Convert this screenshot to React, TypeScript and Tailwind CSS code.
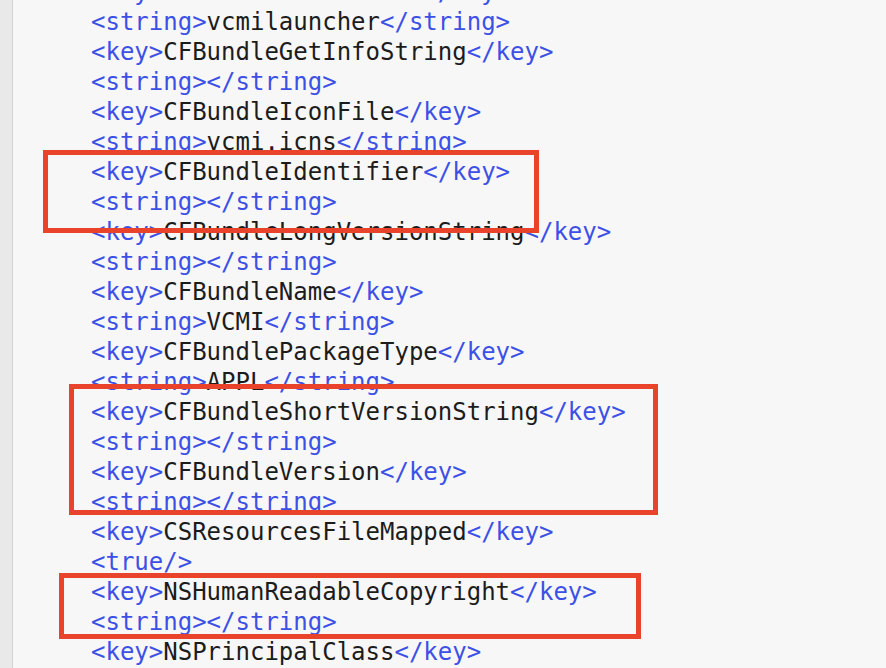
const lines: [string, string][] = [
  ["key", "CFBundleExecutable"],
  ["string", "vcmilauncher"],
  ["key", "CFBundleGetInfoString"],
  ["string", ""],
  ["key", "CFBundleIconFile"],
  ["string", "vcmi.icns"],
  ["key", "CFBundleIdentifier"],
  ["string", ""],
  ["key", "CFBundleLongVersionString"],
  ["string", ""],
  ["key", "CFBundleName"],
  ["string", "VCMI"],
  ["key", "CFBundlePackageType"],
  ["string", "APPL"],
  ["key", "CFBundleShortVersionString"],
  ["string", ""],
  ["key", "CFBundleVersion"],
  ["string", ""],
  ["key", "CSResourcesFileMapped"],
  ["true", ""],
  ["key", "NSHumanReadableCopyright"],
  ["string", ""],
  ["key", "NSPrincipalClass"],
]

function Line({ tag, value }: { tag: string; value: string }) {
  if (tag === "true") {
    return <div className="h-[30px] whitespace-pre text-[#3d50e6]">{"<true/>"}</div>
  }
  return (
    <div className="h-[30px] whitespace-pre">
      <span className="text-[#3d50e6]">{`<${tag}>`}</span>
      <span className="text-[#1c1c1c]">{value}</span>
      <span className="text-[#3d50e6]">{`</${tag}>`}</span>
    </div>
  )
}

export default function App() {
  return (
    <div className="relative flex h-[668px] w-[886px] overflow-hidden bg-[#f7f7f7] font-['DejaVu_Sans_Mono',monospace] text-[24px] leading-[30px]">
      {/* gutter */}
      <div className="w-[13px] shrink-0 border-r border-[#d2d2d2] bg-[#e9e9e9]"></div>

      {/* code */}
      <div className="-mt-[23px] pl-[78px]">
        {lines.map(([tag, value], i) => (
          <Line key={i} tag={tag} value={value} />
        ))}
      </div>

      {/* annotation boxes */}
      <div className="absolute left-[43px] top-[150px] h-[83px] w-[496px] border-[5px] border-[#e9432b]"></div>
      <div className="absolute left-[69px] top-[384px] h-[131px] w-[589px] border-[5px] border-[#e9432b]"></div>
      <div className="absolute left-[59px] top-[573px] h-[66px] w-[582px] border-[5px] border-[#e9432b]"></div>
    </div>
  )
}
